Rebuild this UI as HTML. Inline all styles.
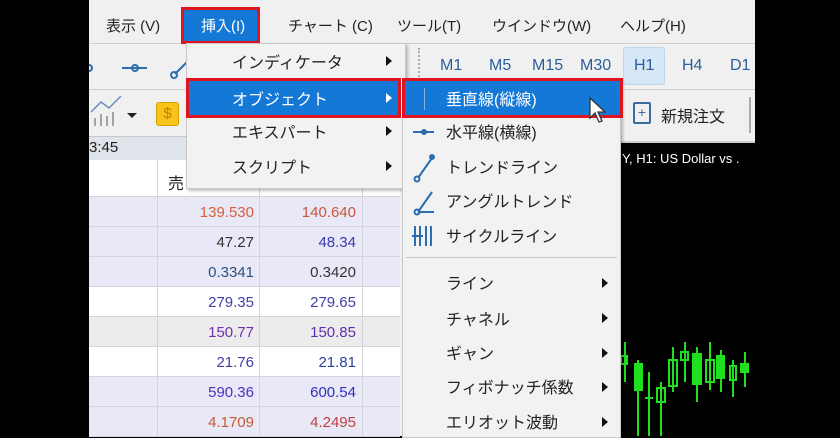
<!DOCTYPE html><html><head><meta charset="utf-8"><style>
*{margin:0;padding:0;box-sizing:border-box}
body{width:840px;height:436px;background:#000;position:relative;overflow:hidden;font-family:"Liberation Sans","Noto Sans CJK JP",sans-serif;color:#222}
.a{position:absolute}
.t{position:absolute;white-space:nowrap}
.row{position:absolute;left:89px;width:311px;height:30px;border-bottom:1px solid #d4d4dc}
.num{position:absolute;font-size:15px;text-align:right;width:90px}
.mi{position:absolute;font-size:16px;white-space:nowrap}
.arr{position:absolute;width:0;height:0;border-top:5px solid transparent;border-bottom:5px solid transparent;border-left:6px solid #111}
</style></head><body>
<div class="a" style="left:89px;top:0;width:666px;height:436px;background:#f0f0f0"></div>
<!-- menu bar -->
<div class="a" style="left:89px;top:43px;width:666px;height:1px;background:#d0d0d0"></div>
<div class="t" style="left:106px;top:15px;font-size:15px">表示 (V)</div>
<div class="a" style="left:181px;top:7px;width:79px;height:37px;border:3px solid #e0141e;background:#1479d6"></div>
<div class="t" style="left:201px;top:15px;font-size:15px;color:#fff">挿入(I)</div>
<div class="t" style="left:288px;top:15px;font-size:15px">チャート (C)</div>
<div class="t" style="left:397px;top:15px;font-size:15px">ツール(T)</div>
<div class="t" style="left:492px;top:15px;font-size:15px">ウインドウ(W)</div>
<div class="t" style="left:620px;top:15px;font-size:15px">ヘルプ(H)</div>
<!-- toolbars -->
<div class="a" style="left:89px;top:89px;width:666px;height:1px;background:#d0d0d0"></div>
<div class="a" style="left:89px;top:136px;width:533px;height:1px;background:#c8c8c8"></div>
<svg class="a" style="left:89px;top:50px" width="100" height="80"><g stroke="#2c6db0" stroke-width="2" fill="none"><circle cx="0" cy="18" r="3"/><line x1="33" y1="18" x2="58" y2="18"/><circle cx="46" cy="18" r="3"/><line x1="86" y1="24" x2="98" y2="12"/><circle cx="85" cy="25" r="3"/></g>
<g stroke="#888" stroke-width="1.5"><polyline points="2,62 12,52 20,58 32,46" fill="none" stroke="#6a8fbf"/><line x1="6" y1="76" x2="6" y2="68"/><line x1="12" y1="76" x2="12" y2="64"/><line x1="18" y1="76" x2="18" y2="66"/><line x1="24" y1="76" x2="24" y2="62"/></g><polygon points="38,63 48,63 43,68" fill="#222"/></svg>
<div class="a" style="left:156px;top:102px;width:23px;height:24px;background:#f6c41a;border:1px solid #d4a000;border-radius:3px;color:#c08000;font-size:15px;text-align:center;line-height:22px">$</div>
<div class="a" style="left:89px;top:137px;width:533px;height:23px;background:#dfe4ea"></div>
<div class="t" style="left:89px;top:139px;font-size:15px">3:45</div>
<div class="a" style="left:89px;top:160px;width:311px;height:37px;background:#fff;border-bottom:1px solid #d4d4dc"></div>
<div class="t" style="left:168px;top:170px;font-size:16px">売</div>
<!-- table rows -->
<div class="row" style="top:197px;background:#e8e8f6"></div>
<div class="row" style="top:227px;background:#e8e8f6"></div>
<div class="row" style="top:257px;background:#e8e8f6"></div>
<div class="row" style="top:287px;background:#fff"></div>
<div class="row" style="top:317px;background:#ececec"></div>
<div class="row" style="top:347px;background:#fff"></div>
<div class="row" style="top:377px;background:#e8e8f6"></div>
<div class="row" style="top:407px;background:#e8e8f6"></div>
<div class="a" style="left:157px;top:160px;width:1px;height:276px;background:#d4d4dc"></div>
<div class="a" style="left:259px;top:160px;width:1px;height:276px;background:#d4d4dc"></div>
<div class="a" style="left:362px;top:160px;width:1px;height:276px;background:#d4d4dc"></div>
<div class="num" style="left:164px;top:204px;color:#d8603a">139.530</div><div class="num" style="left:266px;top:204px;color:#c8553a">140.640</div>
<div class="num" style="left:164px;top:234px;color:#333">47.27</div><div class="num" style="left:266px;top:234px;color:#3a3ab0">48.34</div>
<div class="num" style="left:164px;top:264px;color:#2a5080">0.3341</div><div class="num" style="left:266px;top:264px;color:#333">0.3420</div>
<div class="num" style="left:164px;top:294px;color:#4040a8">279.35</div><div class="num" style="left:266px;top:294px;color:#4040a8">279.65</div>
<div class="num" style="left:164px;top:324px;color:#7030b0">150.77</div><div class="num" style="left:266px;top:324px;color:#6030b0">150.85</div>
<div class="num" style="left:164px;top:354px;color:#4040a0">21.76</div><div class="num" style="left:266px;top:354px;color:#3040a0">21.81</div>
<div class="num" style="left:164px;top:384px;color:#5030c0">590.36</div><div class="num" style="left:266px;top:384px;color:#3030c0">600.54</div>
<div class="num" style="left:164px;top:414px;color:#c85a30">4.1709</div><div class="num" style="left:266px;top:414px;color:#c04040">4.2495</div>
<!-- right toolbar -->
<div class="a" style="left:418px;top:48px;width:2px;height:36px;border-left:2px dotted #aaa"></div>
<div class="a" style="left:623px;top:47px;width:42px;height:38px;background:#d6e8f8;border:1px solid #bcd6ee;border-radius:3px"></div>
<div class="t" style="left:440px;top:57px;font-size:16px;color:#2a5f9a">M1</div>
<div class="t" style="left:489px;top:57px;font-size:16px;color:#2a5f9a">M5</div>
<div class="t" style="left:532px;top:57px;font-size:16px;color:#2a5f9a">M15</div>
<div class="t" style="left:580px;top:57px;font-size:16px;color:#2a5f9a">M30</div>
<div class="t" style="left:634px;top:57px;font-size:16px;color:#2a5f9a">H1</div>
<div class="t" style="left:682px;top:57px;font-size:16px;color:#2a5f9a">H4</div>
<div class="t" style="left:730px;top:57px;font-size:16px;color:#2a5f9a">D1</div>
<div class="a" style="left:633px;top:102px;width:18px;height:22px;border:2px solid #3a6aa0;border-radius:2px;color:#3a6aa0;font-size:14px;text-align:center;line-height:17px">+</div>
<div class="t" style="left:661px;top:103px;font-size:16px">新規注文</div>
<div class="a" style="left:749px;top:97px;width:2px;height:36px;background:#aaa"></div>
<!-- chart -->
<div class="a" style="left:620px;top:141px;width:135px;height:295px;background:#000;border-top:2px solid #ccc"></div>
<div class="t" style="left:622px;top:151px;font-size:13px;color:#fff">Y, H1:  US Dollar vs .</div>
<svg class="a" style="left:620px;top:342px" width="135" height="94"><g stroke="#1fe01f" stroke-width="2" fill="none">
<line x1="5" y1="0" x2="5" y2="40"/><rect x="1" y="14" width="6" height="8"/>
<line x1="18" y1="18" x2="18" y2="94"/><rect x="15" y="22" width="7" height="26" fill="#1fe01f"/>
<line x1="29" y1="30" x2="29" y2="94"/><line x1="25" y1="56" x2="33" y2="56"/>
<line x1="41" y1="40" x2="41" y2="94"/><rect x="37" y="46" width="8" height="14"/>
<line x1="53" y1="5" x2="53" y2="50"/><rect x="49" y="18" width="8" height="26"/>
<line x1="65" y1="0" x2="65" y2="40"/><rect x="61" y="10" width="7" height="8"/>
<line x1="77" y1="5" x2="77" y2="60"/><rect x="73" y="12" width="8" height="30" fill="#1fe01f"/>
<line x1="90" y1="0" x2="90" y2="48"/><rect x="86" y="18" width="8" height="22"/>
<line x1="101" y1="8" x2="101" y2="50"/><rect x="97" y="14" width="7" height="22" fill="#1fe01f"/>
<line x1="113" y1="18" x2="113" y2="55"/><rect x="110" y="24" width="6" height="14"/>
<line x1="125" y1="10" x2="125" y2="45"/><rect x="121" y="22" width="7" height="8" fill="#1fe01f"/>
</g></svg>
<!-- menu 1 -->
<div class="a" style="left:186px;top:43px;width:220px;height:146px;background:#f2f2f2;border:1px solid #c8c8c8;box-shadow:2px 2px 3px rgba(0,0,0,.25)"></div>
<div class="a" style="left:186px;top:78px;width:215px;height:40px;border:3px solid #e0141e;background:#1479d6"></div>
<div class="mi" style="left:232px;top:49px">インディケータ</div><div class="arr" style="left:386px;top:56px"></div>
<div class="mi" style="left:232px;top:86px;color:#fff">オブジェクト</div><div class="arr" style="left:386px;top:93px;border-left-color:#fff"></div>
<div class="mi" style="left:232px;top:119px">エキスパート</div><div class="arr" style="left:386px;top:126px"></div>
<div class="mi" style="left:232px;top:154px">スクリプト</div><div class="arr" style="left:386px;top:161px"></div>
<!-- submenu -->
<div class="a" style="left:402px;top:78px;width:219px;height:360px;background:#f2f2f2;border:1px solid #c8c8c8;box-shadow:2px 2px 3px rgba(0,0,0,.25)"></div>
<div class="a" style="left:402px;top:78px;width:221px;height:40px;border:3px solid #e0141e;background:#1479d6"></div>
<div class="a" style="left:424px;top:88px;width:1px;height:22px;background:#8ab4e0"></div>
<div class="mi" style="left:446px;top:86px;color:#fff">垂直線(縦線)</div>
<svg class="a" style="left:588px;top:96px" width="22" height="30"><path d="M2 2 L2 22 L7 17 L11 26 L14 25 L10 16 L17 16 Z" fill="#fff" stroke="#333" stroke-width="1.3"/></svg>
<svg class="a" style="left:410px;top:120px" width="30" height="130"><g stroke="#2c6db0" stroke-width="2" fill="none"><line x1="3" y1="12" x2="24" y2="12"/><circle cx="14" cy="12" r="2" fill="#2c6db0"/>
<line x1="8" y1="58" x2="22" y2="38"/><circle cx="7" cy="59" r="2.5"/><circle cx="22" cy="37" r="2" fill="#2c6db0"/>
<line x1="8" y1="92" x2="22" y2="72"/><line x1="8" y1="92" x2="24" y2="92"/><circle cx="7" cy="92" r="2.5"/>
<line x1="5" y1="106" x2="5" y2="126"/><line x1="10" y1="106" x2="10" y2="126"/><line x1="16" y1="106" x2="16" y2="126"/><line x1="21" y1="106" x2="21" y2="126"/><line x1="2" y1="116" x2="13" y2="116"/></g></svg>
<div class="mi" style="left:446px;top:119px">水平線(横線)</div>
<div class="mi" style="left:446px;top:154px">トレンドライン</div>
<div class="mi" style="left:446px;top:188px">アングルトレンド</div>
<div class="mi" style="left:446px;top:223px">サイクルライン</div>
<div class="a" style="left:406px;top:257px;width:211px;height:1px;background:#c8c8c8"></div>
<div class="mi" style="left:446px;top:270px">ライン</div><div class="arr" style="left:602px;top:278px"></div>
<div class="mi" style="left:446px;top:306px">チャネル</div><div class="arr" style="left:602px;top:313px"></div>
<div class="mi" style="left:446px;top:340px">ギャン</div><div class="arr" style="left:602px;top:348px"></div>
<div class="mi" style="left:446px;top:374px">フィボナッチ係数</div><div class="arr" style="left:602px;top:382px"></div>
<div class="mi" style="left:446px;top:409px">エリオット波動</div><div class="arr" style="left:602px;top:417px"></div>
</body></html>
